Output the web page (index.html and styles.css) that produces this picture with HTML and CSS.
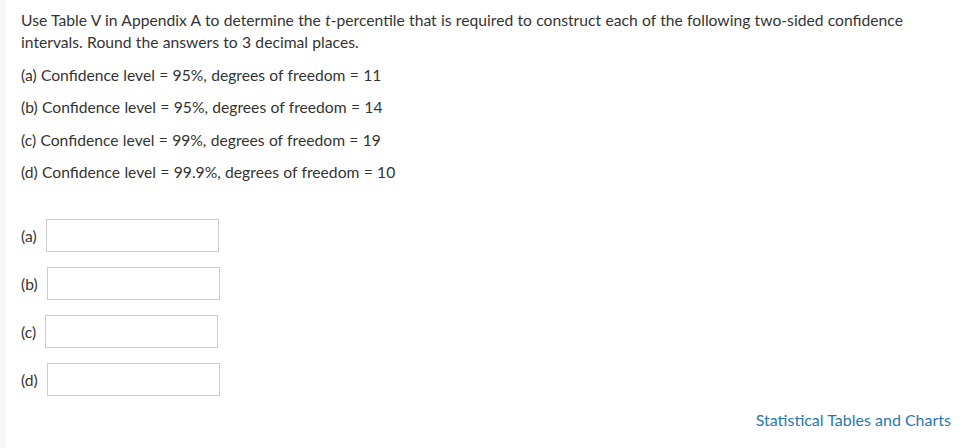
FILE: index.html
```html
<!DOCTYPE html>
<html>
<head>
<meta charset="utf-8">
<link rel="stylesheet" href="styles.css">
</head>
<body>
<div class="page">
  <div class="strip"></div>
  <div class="content">
    <p class="q">Use Table V in Appendix A to determine the <i>t</i>-percentile that is required to construct each of the following two-sided confidence intervals. Round the answers to 3 decimal places.</p>
    <p class="q">(a) Confidence level = 95%, degrees of freedom = 11</p>
    <p class="q">(b) Confidence level = 95%, degrees of freedom = 14</p>
    <p class="q">(c) Confidence level = 99%, degrees of freedom = 19</p>
    <p class="q">(d) Confidence level = 99.9%, degrees of freedom = 10</p>
    <div class="answers">
      <div class="row"><span class="lbl">(a)</span><input class="box" type="text"></div>
      <div class="row"><span class="lbl">(b)</span><input class="box" type="text"></div>
      <div class="row"><span class="lbl">(c)</span><input class="box" type="text"></div>
      <div class="row"><span class="lbl">(d)</span><input class="box" type="text"></div>
    </div>
    <div class="footer"><a class="link" href="#">Statistical Tables and Charts</a></div>
  </div>
</div>
</body>
</html>
```

FILE: styles.css
```css
html, body {
  margin: 0;
  padding: 0;
  background: #fff;
}
.page {
  display: flex;
  min-height: 448px;
  font-family: Lato, "Liberation Sans", sans-serif;
  font-size: 16px;
  color: #333;
}
.strip {
  width: 6px;
  flex: none;
  background: #f7f7f7;
}
.content {
  flex: 1;
  padding: 9px 12px 0 15px;
}
.q {
  margin: 0 0 10.6px 0;
  line-height: 22px;
  font-size: 15.66px;
  word-spacing: 0.3px;
}
.answers {
  margin-top: 36px;
  display: flex;
  flex-direction: column;
  gap: 15px;
}
.row {
  display: flex;
  align-items: center;
  gap: 9px;
}
.lbl {
  line-height: 22px;
  font-size: 15.66px;
}
.box {
  width: 173px;
  height: 33px;
  box-sizing: border-box;
  border: 1px solid #ccc;
  border-radius: 0;
  padding: 0 6px;
  margin: 0;
  font-family: inherit;
  font-size: 16px;
  background: #fff;
}
.footer {
  display: flex;
  justify-content: flex-end;
  margin-top: 13px;
}
.link {
  color: #1f78b4;
  text-decoration: none;
  line-height: 22px;
}
```
